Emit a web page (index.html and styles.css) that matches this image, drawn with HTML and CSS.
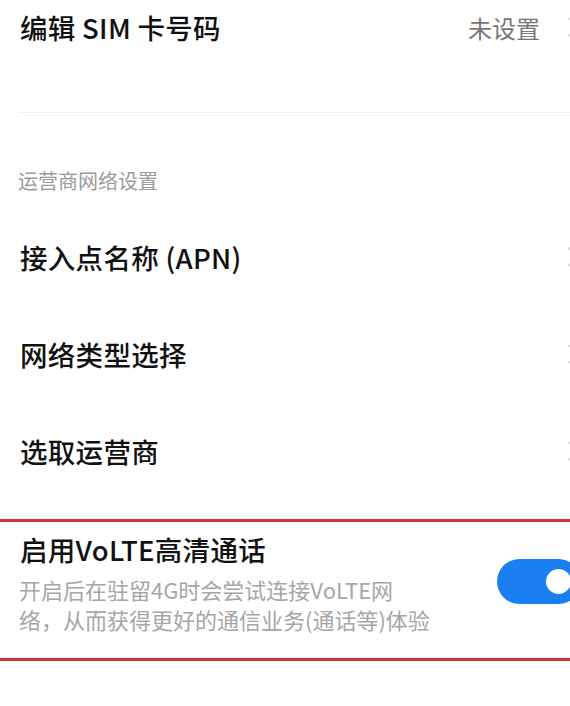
FILE: index.html
```html
<!DOCTYPE html>
<html lang="zh-CN">
<head>
<meta charset="utf-8">
<link rel="stylesheet" href="styles.css">
</head>
<body>
<div class="page">
  <div class="row row-top">
    <span class="title">编辑 SIM 卡号码</span>
    <span class="value">未设置</span>
    <svg class="chev" viewBox="0 0 12 22" width="12" height="22"><path d="M2 2 L10 11 L2 20" fill="none" stroke="#c8c8c8" stroke-width="2"/></svg>
  </div>
  <div class="divider"></div>
  <div class="section">运营商网络设置</div>
  <div class="row item">
    <span class="title">接入点名称 (APN)</span>
    <svg class="chev" viewBox="0 0 12 22" width="12" height="22"><path d="M2 2 L10 11 L2 20" fill="none" stroke="#c8c8c8" stroke-width="2"/></svg>
  </div>
  <div class="row item">
    <span class="title">网络类型选择</span>
    <svg class="chev" viewBox="0 0 12 22" width="12" height="22"><path d="M2 2 L10 11 L2 20" fill="none" stroke="#c8c8c8" stroke-width="2"/></svg>
  </div>
  <div class="row item">
    <span class="title">选取运营商</span>
    <svg class="chev" viewBox="0 0 12 22" width="12" height="22"><path d="M2 2 L10 11 L2 20" fill="none" stroke="#c8c8c8" stroke-width="2"/></svg>
  </div>
  <div class="volte">
    <div class="volte-text">
      <div class="title">启用VoLTE高清通话</div>
      <div class="desc">开启后在驻留4G时会尝试连接VoLTE网<br>络，从而获得更好的通信业务(通话等)体验</div>
    </div>
    <div class="toggle"><div class="knob"></div></div>
  </div>
</div>
</body>
</html>
```

FILE: styles.css
```css
html, body {
  margin: 0;
  padding: 0;
  background: #ffffff;
  overflow: hidden;
}
.page {
  width: 570px;
  height: 706px;
  font-family: "Noto Sans CJK SC", "Noto Sans", sans-serif;
  color: #111;
}
.row {
  display: flex;
  align-items: center;
  padding-left: 20px;
  margin-right: -9px;
}
.row-top {
  height: 54px;
  margin-bottom: 58px;
}
.title {
  font-size: 27.5px;
  font-weight: 500;
  line-height: 34px;
  flex: 1;
  letter-spacing: 0.3px;
}
.value {
  font-size: 24px;
  color: #777;
  margin-right: 27px;
}
.chev {
  flex: none;
}
.divider {
  height: 1px;
  background: #ececec;
  margin-left: 18px;
}
.section {
  padding: 56px 0 15px 18px;
  font-size: 20px;
  line-height: 24px;
  color: #9a9a9a;
}
.item {
  height: 97px;
}
.volte {
  margin-top: 20px;
  border-top: 3px solid #d8322d;
  border-bottom: 3px solid #d8322d;
  height: 136px;
  display: flex;
  align-items: flex-start;
  padding-left: 20px;
}
.volte-text {
  flex: 1;
  padding-top: 10px;
}
.volte .title {
  line-height: 34px;
}
.desc {
  font-size: 22px;
  line-height: 30px;
  color: #a6a6a6;
  margin-top: 8px;
  margin-left: -1px;
}
.toggle {
  flex: none;
  width: 84px;
  height: 45px;
  border-radius: 23px;
  background: #1a7ff0;
  margin-top: 37px;
  margin-right: -11px;
  position: relative;
}
.knob {
  position: absolute;
  right: 10px;
  top: 10px;
  width: 25px;
  height: 25px;
  border-radius: 50%;
  background: #fff;
}
```
